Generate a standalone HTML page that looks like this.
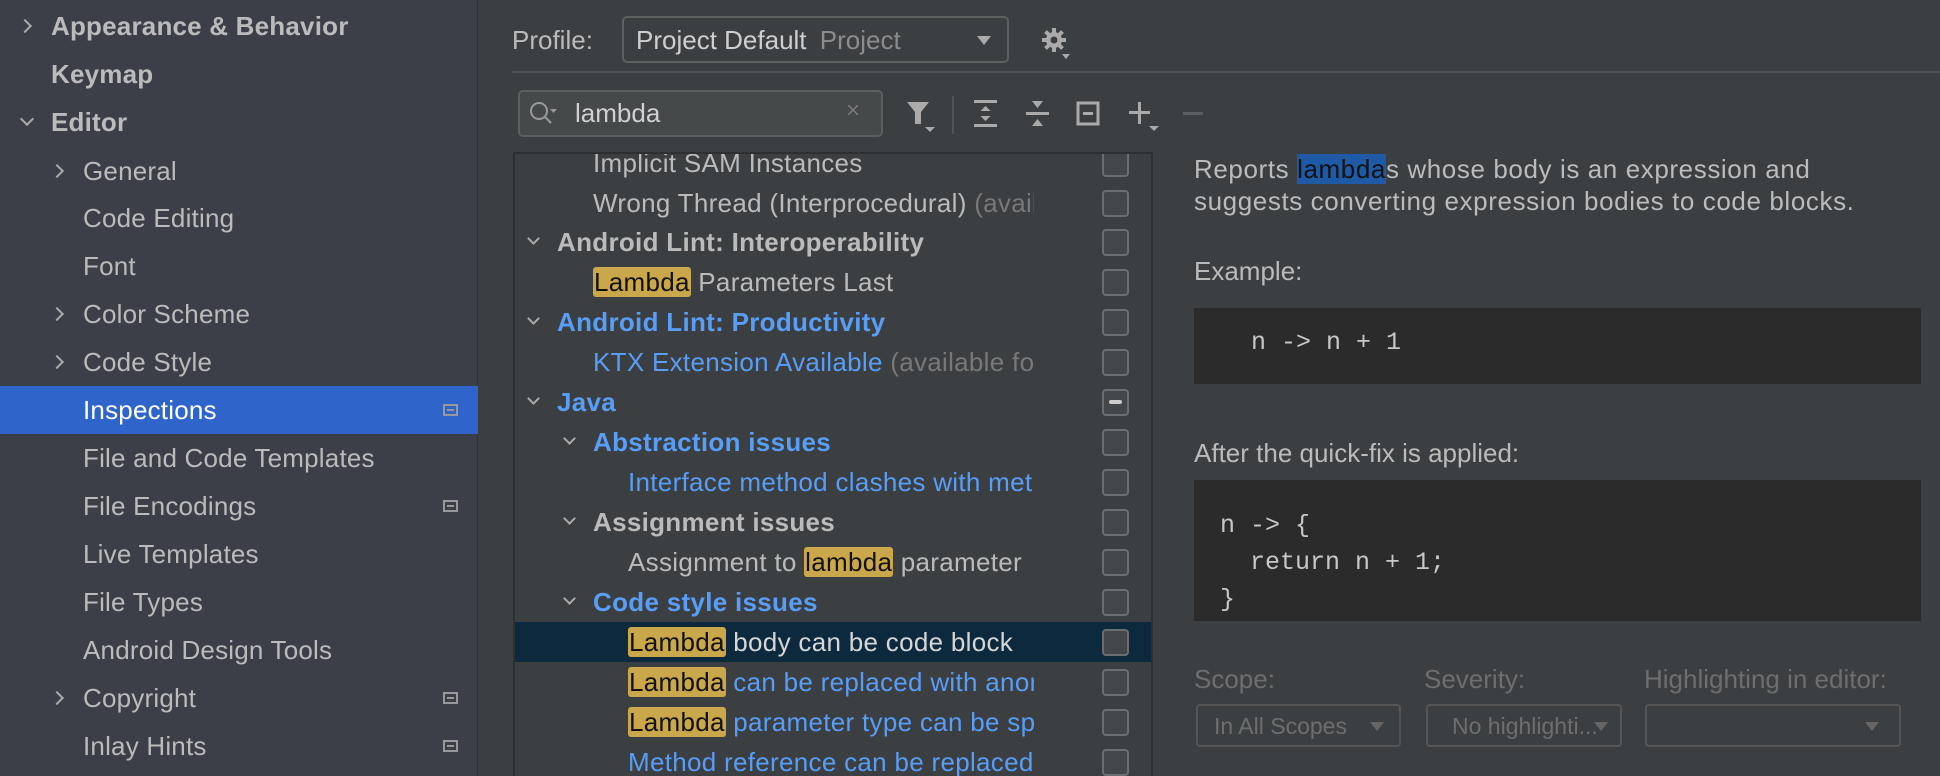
<!DOCTYPE html>
<html><head><meta charset="utf-8">
<style>
*{margin:0;padding:0;box-sizing:border-box}
body{width:1940px;height:776px;overflow:hidden;background:#3c3f41;font-family:"Liberation Sans",sans-serif;color:#bbbbbb;position:relative;font-size:26px}
.abs{position:absolute;white-space:nowrap}
#side{position:absolute;left:0;top:0;width:478px;height:776px;background:#3c3f47;border-right:1px solid #323232}
.sr{position:absolute;left:0;width:478px;height:48px;line-height:48px;font-size:26px;color:#bbbbbb;letter-spacing:0.2px}
.sr .t{position:absolute}
.chev{position:absolute;width:10px;height:10px;border-right:2px solid #aaa;border-bottom:2px solid #aaa}
.right{transform:rotate(-45deg)}
.down{transform:rotate(45deg)}
.sel{background:#2f65ca;color:#fff}
.b{font-weight:bold}
.mini{position:absolute;right:20px;top:18px;width:15px;height:12px;border:2px solid #999}
.mini:after{content:"";position:absolute;left:2px;right:2px;top:3px;height:2px;background:#999}
#tree{position:absolute;left:513px;top:152px;width:640px;height:624px;border:2px solid #2e2f30;border-bottom:none;overflow:hidden;background:#3c3f41}
.tr{position:absolute;left:0;width:636px;height:40px;line-height:40px;font-size:26px;letter-spacing:0.3px}
.tr .t{position:absolute;width:1200px}
.clip{overflow:hidden;position:absolute;left:0;width:519px;height:40px}
.cb{position:absolute;left:587px;top:7px;width:27px;height:27px;border:2px solid #6b6e70;border-radius:4px;background:#43474a}
.blue{color:#589df6}
.gray{color:#787878}
.hl{background:#c9a74a;color:#111;border-radius:3px;padding:0 1px}
.tchev{position:absolute;width:9px;height:9px;border-right:2px solid #aaa;border-bottom:2px solid #aaa;transform:rotate(45deg);top:12px}
.mono{font-family:"Liberation Mono","DejaVu Sans Mono",monospace;font-size:25px;color:#c8c8c8}
.dd{position:absolute;border:2px solid #555;border-radius:4px;height:43px;top:704px}
.tri{position:absolute;width:0;height:0;border-left:7px solid transparent;border-right:7px solid transparent;border-top:9px solid #666}
</style></head><body>
<div id="side">
 <div class="sr" style="top:2px"><div class="chev right" style="left:20px;top:19px"></div><span class="t b" style="left:51px">Appearance &amp; Behavior</span></div>
 <div class="sr" style="top:50px"><span class="t b" style="left:51px">Keymap</span></div>
 <div class="sr" style="top:98px"><div class="chev down" style="left:22px;top:16px"></div><span class="t b" style="left:51px">Editor</span></div>
 <div class="sr" style="top:147px"><div class="chev right" style="left:52px;top:19px"></div><span class="t" style="left:83px">General</span></div>
 <div class="sr" style="top:194px"><span class="t" style="left:83px">Code Editing</span></div>
 <div class="sr" style="top:242px"><span class="t" style="left:83px">Font</span></div>
 <div class="sr" style="top:290px"><div class="chev right" style="left:52px;top:19px"></div><span class="t" style="left:83px">Color Scheme</span></div>
 <div class="sr" style="top:338px"><div class="chev right" style="left:52px;top:19px"></div><span class="t" style="left:83px">Code Style</span></div>
 <div class="sr sel" style="top:386px"><span class="t" style="left:83px">Inspections</span><div class="mini"></div></div>
 <div class="sr" style="top:434px"><span class="t" style="left:83px">File and Code Templates</span></div>
 <div class="sr" style="top:482px"><span class="t" style="left:83px">File Encodings</span><div class="mini"></div></div>
 <div class="sr" style="top:530px"><span class="t" style="left:83px">Live Templates</span></div>
 <div class="sr" style="top:578px"><span class="t" style="left:83px">File Types</span></div>
 <div class="sr" style="top:626px"><span class="t" style="left:83px">Android Design Tools</span></div>
 <div class="sr" style="top:674px"><div class="chev right" style="left:52px;top:19px"></div><span class="t" style="left:83px">Copyright</span><div class="mini"></div></div>
 <div class="sr" style="top:722px"><span class="t" style="left:83px">Inlay Hints</span><div class="mini"></div></div>
</div>

<div class="abs" style="left:512px;top:25px;font-size:26px">Profile:</div>
<div class="abs" style="left:622px;top:16px;width:387px;height:47px;border:2px solid #5e6060;border-radius:5px;background:#3c3f41"></div>
<div class="abs" style="left:636px;top:25px;font-size:26px;color:#cfcfcf">Project Default <span style="color:#8c8c8c;margin-left:6px">Project</span></div>
<div class="tri" style="left:977px;top:36px;border-top-color:#aaa"></div>
<svg class="abs" style="left:1040px;top:26px" width="36" height="34" viewBox="0 0 36 34"><g fill="#aaa"><circle cx="14" cy="14" r="8"/><rect x="12" y="2" width="4" height="24"/><rect x="2" y="12" width="24" height="4"/><rect x="12" y="2" width="4" height="24" transform="rotate(45 14 14)"/><rect x="12" y="2" width="4" height="24" transform="rotate(-45 14 14)"/></g><circle cx="14" cy="14" r="3.5" fill="#3c3f41"/><path d="M22 28h8l-4 5z" fill="#aaa"/></svg>
<div class="abs" style="left:512px;top:71px;width:1428px;height:2px;background:#4e5153"></div>

<div class="abs" style="left:518px;top:90px;width:365px;height:47px;border:2px solid #5e6060;border-radius:5px;background:#45494a"></div>
<svg class="abs" style="left:528px;top:100px" width="34" height="28"><circle cx="11" cy="11" r="8" fill="none" stroke="#999" stroke-width="2"/><path d="M17 17l6 6" stroke="#999" stroke-width="2"/><path d="M22 9h7l-3.5 4z" fill="#999"/></svg>
<div class="abs" style="left:575px;top:98px;font-size:26px;color:#d0d0d0">lambda</div>
<div class="abs" style="left:846px;top:97px;font-size:24px;color:#777">×</div>

<svg class="abs" style="left:905px;top:98px" width="32" height="36"><path d="M2 4h22l-8 10v12h-6V14z" fill="#aaa"/><path d="M20 29h10l-5 5z" fill="#aaa"/></svg>
<div class="abs" style="left:952px;top:96px;width:2px;height:38px;background:#515456"></div>
<svg class="abs" style="left:972px;top:99px" width="28" height="30"><g fill="#aaa"><rect x="2" y="1" width="23" height="3"/><rect x="2" y="25" width="23" height="3"/><path d="M13.5 7l5 5h-10zM13.5 22l5-5h-10z"/></g></svg>
<svg class="abs" style="left:1024px;top:99px" width="28" height="30"><g fill="#aaa"><rect x="2" y="13" width="23" height="3"/><path d="M8 2h11l-5.5 7zM8 27h11l-5.5-7z"/></g></svg>
<svg class="abs" style="left:1076px;top:101px" width="26" height="26"><rect x="2" y="2" width="20" height="21" fill="none" stroke="#aaa" stroke-width="3"/><rect x="7" y="11" width="10" height="3" fill="#aaa"/></svg>
<svg class="abs" style="left:1128px;top:101px" width="34" height="34"><g fill="#aaa"><rect x="10" y="1" width="3" height="22"/><rect x="1" y="10" width="21" height="3"/><path d="M21 25h10l-5 5z"/></g></svg>
<div class="abs" style="left:1183px;top:112px;width:20px;height:3px;background:#5b5e60"></div>

<div id="tree">
 <div class="tr" style="top:-11px"><div class="clip"><span class="t" style="left:78px">Implicit SAM Instances</span></div><div class="cb"></div></div>
 <div class="tr" style="top:29px"><div class="clip"><span class="t" style="left:78px">Wrong Thread (Interprocedural) <span class="gray">(available for Code Inspection)</span></span></div><div class="cb"></div></div>
 <div class="tr" style="top:68px"><div class="tchev" style="left:14px"></div><div class="clip"><span class="t b" style="left:42px">Android Lint: Interoperability</span></div><div class="cb"></div></div>
 <div class="tr" style="top:108px"><div class="clip"><span class="t" style="left:78px"><span class="hl">Lambda</span> Parameters Last</span></div><div class="cb"></div></div>
 <div class="tr" style="top:148px"><div class="tchev" style="left:14px"></div><div class="clip"><span class="t b blue" style="left:42px">Android Lint: Productivity</span></div><div class="cb"></div></div>
 <div class="tr" style="top:188px"><div class="clip"><span class="t" style="left:78px"><span class="blue">KTX Extension Available</span> <span class="gray">(available for Code Inspection)</span></span></div><div class="cb"></div></div>
 <div class="tr" style="top:228px"><div class="tchev" style="left:14px"></div><div class="clip"><span class="t b blue" style="left:42px">Java</span></div><div class="cb"><div style="position:absolute;left:5px;top:9px;width:13px;height:4px;border-radius:2px;background:#ccc"></div></div></div>
 <div class="tr" style="top:268px"><div class="tchev" style="left:50px"></div><div class="clip"><span class="t b blue" style="left:78px">Abstraction issues</span></div><div class="cb"></div></div>
 <div class="tr" style="top:308px"><div class="clip"><span class="t blue" style="left:113px">Interface method clashes with method in java.lang.Object</span></div><div class="cb"></div></div>
 <div class="tr" style="top:348px"><div class="tchev" style="left:50px"></div><div class="clip"><span class="t b" style="left:78px">Assignment issues</span></div><div class="cb"></div></div>
 <div class="tr" style="top:388px"><div class="clip"><span class="t" style="left:113px">Assignment to <span class="hl">lambda</span> parameter</span></div><div class="cb"></div></div>
 <div class="tr" style="top:428px"><div class="tchev" style="left:50px"></div><div class="clip"><span class="t b blue" style="left:78px">Code style issues</span></div><div class="cb"></div></div>
 <div class="tr" style="top:468px;background:#0d293e"><div class="clip"><span class="t" style="left:113px;color:#d6d6d6"><span class="hl">Lambda</span> body can be code block</span></div><div class="cb"></div></div>
 <div class="tr" style="top:508px"><div class="clip"><span class="t blue" style="left:113px"><span class="hl">Lambda</span> can be replaced with anonymous class</span></div><div class="cb"></div></div>
 <div class="tr" style="top:548px"><div class="clip"><span class="t blue" style="left:113px"><span class="hl">Lambda</span> parameter type can be specified</span></div><div class="cb"></div></div>
 <div class="tr" style="top:588px"><div class="clip"><span class="t blue" style="left:113px">Method reference can be replaced with lambda</span></div><div class="cb"></div></div>
</div>

<div class="abs" style="left:1194px;top:153px;font-size:26px;line-height:32px;letter-spacing:0.6px">Reports <span style="background:#1f5aa6;color:#111">lambda</span>s whose body is an expression and<br>suggests converting expression bodies to code blocks.</div>
<div class="abs" style="left:1194px;top:256px;font-size:26px">Example:</div>
<div class="abs" style="left:1194px;top:308px;width:727px;height:76px;background:#2b2b2b"></div>
<div class="abs mono" style="left:1251px;top:328px">n -&gt; n + 1</div>
<div class="abs" style="left:1194px;top:438px;font-size:26px">After the quick-fix is applied:</div>
<div class="abs" style="left:1194px;top:480px;width:727px;height:141px;background:#2b2b2b"></div>
<div class="abs mono" style="left:1220px;top:507px;line-height:37px">n -&gt; {<br>&nbsp;&nbsp;return n + 1;<br>}</div>

<div class="abs" style="left:1194px;top:664px;font-size:26px;color:#6e6e6e">Scope:</div>
<div class="abs" style="left:1424px;top:664px;font-size:26px;color:#6e6e6e">Severity:</div>
<div class="abs" style="left:1644px;top:664px;font-size:26px;color:#6e6e6e">Highlighting in editor:</div>
<div class="dd" style="left:1196px;width:205px"><span class="abs" style="left:16px;top:7px;font-size:23px;color:#6e6e6e">In All Scopes</span><div class="tri" style="left:172px;top:16px"></div></div>
<div class="dd" style="left:1426px;width:196px;overflow:hidden"><span class="abs" style="left:24px;top:7px;font-size:23px;color:#6e6e6e">No highlighti...</span><div class="tri" style="left:166px;top:16px"></div></div>
<div class="dd" style="left:1645px;width:256px"><div class="tri" style="left:218px;top:16px"></div></div>
</body></html>
